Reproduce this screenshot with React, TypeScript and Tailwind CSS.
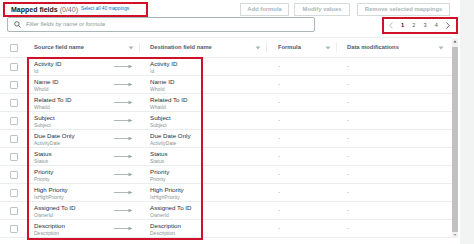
import React from 'react';

const rows = [
  ['Activity ID', 'Id'],
  ['Name ID', 'WhoId'],
  ['Related To ID', 'WhatId'],
  ['Subject', 'Subject'],
  ['Due Date Only', 'ActivityDate'],
  ['Status', 'Status'],
  ['Priority', 'Priority'],
  ['High Priority', 'IsHighPriority'],
  ['Assigned To ID', 'OwnerId'],
  ['Description', 'Description'],
];

function Checkbox() {
  return <div className="w-[8px] h-[8px] border border-[#bcc5c6] rounded-[1px] bg-white" />;
}

function Caret() {
  return (
    <svg width="6" height="4" viewBox="0 0 6 4" className="shrink-0">
      <path d="M0.5 0.5 L5.5 0.5 L3 3.5 Z" fill="#aab7b8" />
    </svg>
  );
}

function Arrow() {
  return (
    <svg width="19" height="5" viewBox="0 0 19 5" className="shrink-0">
      <line x1="0" y1="2.5" x2="16" y2="2.5" stroke="#9aa5a6" strokeWidth="0.8" />
      <path d="M14.5 0.8 L18.5 2.5 L14.5 4.2 Z" fill="#9aa5a6" />
    </svg>
  );
}

function HeaderCell({ label, w, pl }: { label: string; w: string; pl: string }) {
  return (
    <div className={`${w} ${pl} relative h-full flex items-center justify-between pr-[6px]`}>
      <span className="text-[5.8px] font-bold text-[#545b64] leading-none">{label}</span>
      <Caret />
      <div className="absolute right-0 top-[5px] bottom-[5px] w-px bg-[#eaeded]" />
    </div>
  );
}

export default function App() {
  return (
    <div className="w-[474px] h-[244px] flex bg-[#f2f3f3] overflow-hidden font-['Liberation_Sans',Arial,sans-serif] text-[#16191f]">
      <div className="w-[460px] h-full bg-white flex flex-col">
        {/* Title and action buttons */}
        <div className="h-[17px] flex items-start">
          <div className="ml-[3px] mt-[2px] w-[145px] h-[15px] border-2 border-[#d1102a] flex items-center pl-[6px] whitespace-nowrap">
            <span className="text-[7px] font-bold leading-none text-[#16191f]">Mapped fields</span>
            <span className="text-[7px] text-[#687078] leading-none ml-[2px]">(0/40)</span>
            <span className="text-[4.8px] text-[#0073bb] leading-none ml-[3px]">Select all 40 mappings</span>
          </div>
          <div className="ml-auto mr-[10px] mt-[3px] flex gap-[5px]">
            <div className="w-[49px] h-[13px] border border-[#d5dbdb] flex items-center justify-center text-[5.9px] font-bold text-[#aab7b8] whitespace-nowrap">Add formula</div>
            <div className="w-[56px] h-[13px] border border-[#d5dbdb] flex items-center justify-center text-[5.9px] font-bold text-[#aab7b8] whitespace-nowrap">Modify values</div>
            <div className="ml-[2px] w-[93px] h-[13px] border border-[#d5dbdb] flex items-center justify-center text-[5.9px] font-bold text-[#aab7b8] whitespace-nowrap">Remove selected mappings</div>
          </div>
        </div>

        {/* Search and pagination */}
        <div className="h-[17px] flex items-start">
          <div className="ml-[7px] w-[308px] h-[15px] border border-[#aab7b8] rounded-[2px] flex items-center pl-[6px] gap-[5px]">
            <svg width="7" height="7" viewBox="0 0 7 7">
              <circle cx="2.9" cy="2.9" r="2.2" stroke="#545b64" strokeWidth="0.9" fill="none" />
              <line x1="4.5" y1="4.5" x2="6.5" y2="6.5" stroke="#545b64" strokeWidth="1" />
            </svg>
            <span className="text-[5.75px] italic text-[#879596] leading-none">Filter fields by name or formula</span>
          </div>
          <div className="ml-auto mr-[2px] w-[76px] h-[17px] border-2 border-[#d1102a] flex items-center pl-[5px] pr-[6px] justify-between text-[5.6px] text-[#545b64]">
            <svg width="4" height="7" viewBox="0 0 4 7">
              <path d="M3.5 0.5 L0.8 3.5 L3.5 6.5" stroke="#aab7b8" strokeWidth="0.8" fill="none" />
            </svg>
            <span className="font-bold text-[#16191f]">1</span>
            <span>2</span>
            <span>3</span>
            <span>4</span>
            <svg width="4" height="7" viewBox="0 0 4 7">
              <path d="M0.5 0.5 L3.2 3.5 L0.5 6.5" stroke="#545b64" strokeWidth="0.9" fill="none" />
            </svg>
          </div>
        </div>

        {/* Table */}
        <div className="mt-[3px] flex">
          <div className="relative w-[452px]">
            <div className="h-[21px] flex border-y border-[#eaeded]">
              <div className="w-[27px] flex items-center justify-center">
                <Checkbox />
              </div>
              <HeaderCell label="Source field name" w="w-[113px]" pl="pl-[7px]" />
              <HeaderCell label="Destination field name" w="w-[127px]" pl="pl-[10px]" />
              <HeaderCell label="Formula" w="w-[70px]" pl="pl-[11px]" />
              <div className="w-[115px] pl-[10px] h-full flex items-center justify-between pr-[8px]">
                <span className="text-[5.8px] font-bold text-[#545b64] leading-none">Data modifications</span>
                <Caret />
              </div>
            </div>
            {rows.map(([label, api]) => (
              <div key={label} className="h-[18px] flex items-center border-b border-[#eaeded]">
                <div className="w-[27px] flex items-center justify-center">
                  <Checkbox />
                </div>
                <div className="w-[113px] pl-[7px] pr-[7px] flex items-center justify-between">
                  <div className="flex flex-col">
                    <span className="text-[6.2px] leading-[8px] text-[#232f3e]">{label}</span>
                    <span className="text-[5px] leading-[6px] text-[#879596]">{api}</span>
                  </div>
                  <Arrow />
                </div>
                <div className="w-[127px] pl-[10px] flex flex-col">
                  <span className="text-[6.2px] leading-[8px] text-[#232f3e]">{label}</span>
                  <span className="text-[5px] leading-[6px] text-[#879596]">{api}</span>
                </div>
                <div className="w-[70px] pl-[11px] text-[6px] text-[#879596]">-</div>
                <div className="w-[115px] pl-[10px] text-[6px] text-[#879596]">-</div>
              </div>
            ))}
            {/* highlight over mapped rows */}
            <div className="absolute left-[27px] top-[20px] w-[176px] h-[183px] border-2 border-[#d1102a] pointer-events-none" />
          </div>

          {/* Scrollbar */}
          <div className="w-[6px] h-[200px] mt-[1px] bg-[#f1f1f1] flex flex-col items-center">
            <svg width="6" height="9" viewBox="0 0 6 9">
              <path d="M1.5 4.5 L4.5 4.5 L3 2.5 Z" fill="#505050" />
            </svg>
            <div className="w-[6px] flex-1 bg-[#c1c1c1]" />
            <svg width="6" height="6" viewBox="0 0 6 6">
              <path d="M1.5 2 L4.5 2 L3 4 Z" fill="#a0a0a0" />
            </svg>
          </div>
        </div>
      </div>
    </div>
  );
}
